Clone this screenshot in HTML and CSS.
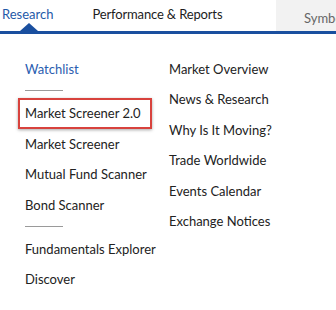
FILE: index.html
```html
<!DOCTYPE html>
<html>
<head>
<meta charset="utf-8">
<link rel="stylesheet" href="styles.css">
</head>
<body>
<div class="page">
  <nav class="topnav">
    <div class="tab tab-active">Research<span class="caret"></span></div>
    <div class="tab tab-perf">Performance &amp; Reports</div>
    <div class="symbol">Symbol</div>
  </nav>
  <div class="menu">
    <ul class="col col-left">
      <li class="item item-blue">Watchlist</li>
      <li class="sep"></li>
      <li class="item item-hl"><span class="hl">Market Screener 2.0</span></li>
      <li class="item">Market Screener</li>
      <li class="item">Mutual Fund Scanner</li>
      <li class="item">Bond Scanner</li>
      <li class="sep"></li>
      <li class="item">Fundamentals Explorer</li>
      <li class="item">Discover</li>
    </ul>
    <ul class="col col-right">
      <li class="item">Market Overview</li>
      <li class="item">News &amp; Research</li>
      <li class="item">Why Is It Moving?</li>
      <li class="item">Trade Worldwide</li>
      <li class="item">Events Calendar</li>
      <li class="item">Exchange Notices</li>
    </ul>
  </div>
</div>
</body>
</html>
```
FILE: styles.css
```css
html, body {
  margin: 0;
  padding: 0;
  background: #fff;
}
body {
  font-family: Lato, "Open Sans", sans-serif;
  font-size: 13px;
  color: #222;
  width: 336px;
  height: 310px;
  overflow: hidden;
}
.topnav {
  display: flex;
  align-items: stretch;
  height: 31px;
  border-bottom: 3px solid #1a4f9f;
  position: relative;
}
.tab {
  position: relative;
  display: flex;
  align-items: center;
  height: 27px;
  padding-left: 2px;
  margin-right: 37px;
  font-size: 13px;
  color: #1d1d1d;
}
.tab-perf {
  letter-spacing: -0.15px;
}
.tab-active {
  color: #1f5aa8;
}
.caret {
  position: absolute;
  left: 20px;
  bottom: -4px;
  width: 0;
  height: 0;
  border-left: 9px solid transparent;
  border-right: 9px solid transparent;
  border-bottom: 8px solid #1a4f9f;
}
.symbol {
  margin-left: auto;
  width: 32px;
  padding-left: 28px;
  background: #f2f2f2;
  color: #666;
  display: flex;
  align-items: center;
  padding-top: 4px;
  white-space: nowrap;
}
.menu {
  display: flex;
  padding: 20px 0 0 25px;
}
.col {
  list-style: none;
  margin: 0;
  padding: 0;
}
.col-left {
  width: 144px;
}
.item {
  height: 30.4px;
  line-height: 30.4px;
  white-space: nowrap;
}
.item-blue {
  color: #2a5db0;
}
.sep {
  height: 1px;
  width: 38px;
  background: #9a9a9a;
  margin: 6px 0 7px;
}
.item-hl {
  position: relative;
}
.hl {
  position: relative;
}
.hl::before {
  content: "";
  position: absolute;
  left: -7px;
  right: -11px;
  top: -7px;
  bottom: -8px;
  border: 2px solid #d8423d;
  box-shadow: 0 1px 3px rgba(0,0,0,0.35);
  line-height: normal;
}
```
